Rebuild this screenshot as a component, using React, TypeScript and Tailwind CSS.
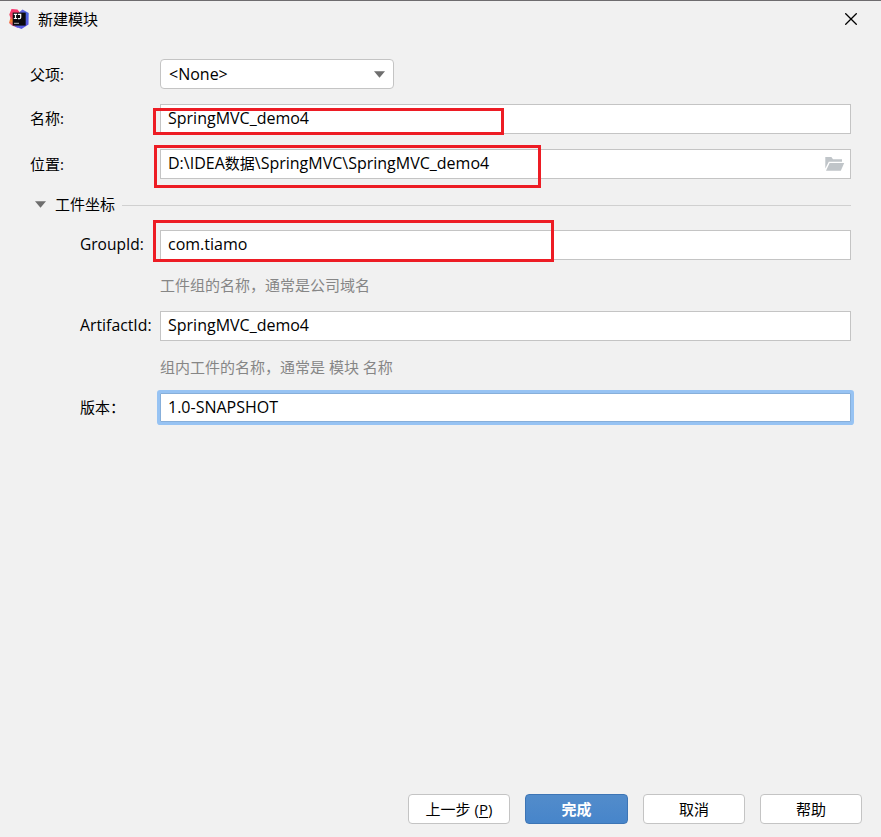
import type { ReactNode } from "react"

function IdeaLogo() {
  return (
    <svg width="20" height="20" viewBox="0 0 20 20" className="shrink-0">
      <defs>
        <linearGradient id="warm" x1="0" y1="0" x2="0" y2="1">
          <stop offset="0" stopColor="#f8316e" />
          <stop offset="0.45" stopColor="#f04a5e" />
          <stop offset="0.62" stopColor="#fb8a2a" />
          <stop offset="0.82" stopColor="#e8567a" />
          <stop offset="1" stopColor="#b04be8" />
        </linearGradient>
        <linearGradient id="cool" x1="0" y1="0" x2="0.6" y2="1">
          <stop offset="0" stopColor="#7a55d8" />
          <stop offset="0.5" stopColor="#4a68e0" />
          <stop offset="1" stopColor="#5a55e0" />
        </linearGradient>
      </defs>
      <path d="M2.5 0 L8.5 0.4 L12 5 L9 19 L3 16.5 L0 14 L1.4 9 L0.3 5.5 Z" fill="url(#warm)" />
      <path d="M10.5 3 L13.5 0.4 L19.7 4 L19.5 15.5 L12.5 20 L6 17.5 L10 9 Z" fill="url(#cool)" />
      <rect x="3.7" y="3.6" width="13" height="13" fill="#0c0a0e" />
      <path
        d="M4.8 5.3 H8.2 M6.5 5.3 V9.5 M4.8 9.5 H8.2 M9 5.3 H11.7 V8.5 Q11.7 9.6 10.4 9.6 H9"
        fill="none"
        stroke="#fff"
        strokeWidth="1.2"
      />
      <path d="M5 14.3 H10" stroke="#b8b8b8" strokeWidth="1" />
    </svg>
  )
}

function Triangle() {
  return (
    <svg width="11" height="7" viewBox="0 0 11 7" className="text-[#6e6e6e]">
      <path d="M0 0.3 H11 L5.5 6.7 Z" fill="currentColor" />
    </svg>
  )
}

function FolderIcon() {
  return (
    <svg width="20" height="16" viewBox="0 0 20 16">
      <path d="M0.3 1 H6.4 L8 3.2 H17 V5.8 H3.8 L0.3 12.5 Z" fill="#c0c5c9" />
      <path d="M4.6 7 H19.2 L15.8 14.8 H1 Z" fill="#c0c5c9" />
    </svg>
  )
}

function Field({ children, icon }: { children: ReactNode; icon?: ReactNode }) {
  return (
    <div className="flex h-[30px] w-[691px] items-center justify-between border border-[#c4c4c4] bg-white pr-[5px] pl-[7px] text-base leading-5">
      <span className="relative -top-px whitespace-pre">{children}</span>
      {icon}
    </div>
  )
}

const button =
  "flex h-[30px] items-center justify-center rounded-[4px] border"

export default function App() {
  return (
    <div className="relative flex h-[837px] w-[881px] flex-col overflow-hidden border-t border-[#6e6c6f] bg-[#f1f1f1] font-['Open_Sans','Noto_Sans_CJK_SC',sans-serif] text-[15px] leading-5 text-black">
      <header className="flex h-9 shrink-0 items-center justify-between pr-6 pl-[9px]">
        <div className="flex items-center gap-[9px]">
          <IdeaLogo />
          <h1>新建模块</h1>
        </div>
        <svg width="12" height="12" viewBox="0 0 12 12" className="text-black">
          <path d="M0.3 0.3 L11.7 11.7 M11.7 0.3 L0.3 11.7" stroke="currentColor" strokeWidth="1.3" />
        </svg>
      </header>

      <main className="flex grow flex-col pt-[22px]">
        <div className="flex h-[30px] items-center pl-[30px]">
          <label className="w-[130px]">父项:</label>
          <div className="flex h-[30px] w-[234px] items-center justify-between rounded-[4px] border border-[#c4c4c4] bg-white pr-2 pl-2">
            <span className="text-base leading-5">&lt;None&gt;</span>
            <Triangle />
          </div>
        </div>

        <div className="mt-[15px] flex h-[30px] items-center pl-[30px]">
          <label className="w-[130px] pb-0.5">名称:</label>
          <Field>SpringMVC_demo4</Field>
        </div>

        <div className="mt-[15px] flex h-[30px] items-center pl-[30px]">
          <label className="w-[130px]">位置:</label>
          <Field icon={<FolderIcon />}>
            D:\IDEA<span className="text-[15px]">数据</span>\SpringMVC\SpringMVC_demo4
          </Field>
        </div>

        <div className="mt-4 flex h-5 items-center pr-[30px] pl-[35px]">
          <div className="pb-0.5">
            <Triangle />
          </div>
          <span className="ml-[9px] pb-0.5">工件坐标</span>
          <div className="ml-[7px] h-px grow bg-[#d0d0d0]" />
        </div>

        <div className="mt-[15px] flex h-[30px] items-center pl-20">
          <label className="w-20 pb-0.5 text-[15.5px]">GroupId:</label>
          <Field>com.tiamo</Field>
        </div>
        <p className="mt-[15px] h-5 pl-40 text-[#868686]">工件组的名称，通常是公司域名</p>

        <div className="mt-4 flex h-[30px] items-center pl-20">
          <label className="w-20 pb-0.5 text-[15.8px]">ArtifactId:</label>
          <Field>SpringMVC_demo4</Field>
        </div>
        <p className="mt-4 h-5 pl-40 text-[#868686]">组内工件的名称，通常是 模块 名称</p>

        <div className="mt-4 flex h-[29px] items-center pl-20">
          <label className="w-20 pb-px">版本：</label>
          <div className="flex h-[29px] w-[691px] items-center rounded-[1px] border border-[#87afda] bg-white pb-px pl-[7px] text-base leading-5 ring-3 ring-[#97c3f3]">
            <span>1.0-SNAPSHOT</span>
          </div>
        </div>
      </main>

      <footer className="flex h-[43px] shrink-0 justify-end gap-[15px] pr-[19px]">
        <button className={`${button} w-[102px] border-[#c4c4c4] bg-white`}>
          <span className="whitespace-pre">
            上一步 (<u className="underline-offset-2">P</u>)
          </span>
        </button>
        <button className={`${button} w-[103px] border-[#3d75b5] bg-linear-to-b from-[#528ccb] to-[#4785ca] font-bold text-white`}>
          完成
        </button>
        <button className={`${button} w-[102px] border-[#c4c4c4] bg-white`}>取消</button>
        <button className={`${button} w-[102px] border-[#c4c4c4] bg-white`}>帮助</button>
      </footer>

      {/* Highlight boxes over the fields */}
      <div className="absolute top-[107px] left-[153px] h-[27px] w-[351px] border-3 border-[#ed1c24]" />
      <div className="absolute top-[144px] left-[154px] h-[43px] w-[387px] border-3 border-[#ed1c24]" />
      <div className="absolute top-[219px] left-[153px] h-[42px] w-[401px] border-3 border-[#ed1c24]" />
    </div>
  )
}
